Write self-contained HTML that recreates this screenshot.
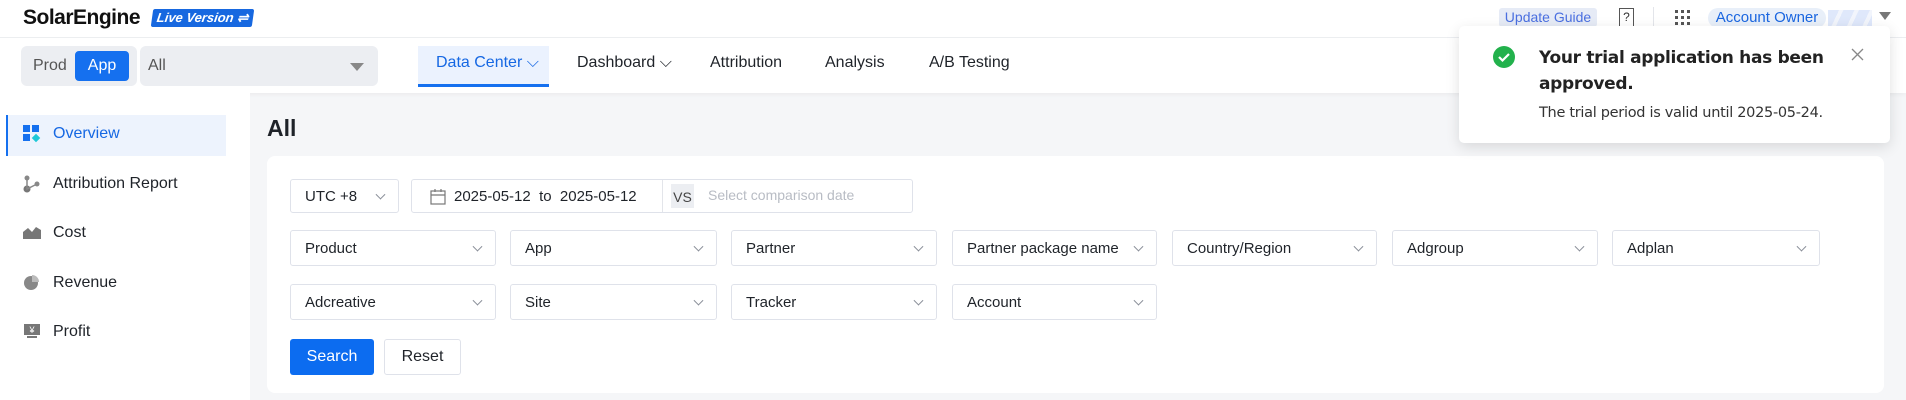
<!DOCTYPE html>
<html><head><meta charset="utf-8"><style>
*{box-sizing:border-box;margin:0;padding:0}
body{width:1906px;height:400px;overflow:hidden;background:#f5f6f8;font-family:"Liberation Sans",Arial,sans-serif;color:#1f2329;position:relative}
.abs{position:absolute}
.top{left:0;top:0;width:1906px;height:38px;background:#fff;border-bottom:1px solid #eceef1}
.bar2{left:0;top:38px;width:1906px;height:55px;background:#fff;box-shadow:0 2px 4px rgba(0,0,0,.04)}
.side{left:0;top:93px;width:250px;height:307px;background:#fff}
.sel{position:absolute;border:1px solid #dfe2ea;border-radius:3px;background:#fff;font-size:15px;display:flex;align-items:center;padding-left:14px;color:#1f2329}
.chev{position:absolute;right:14px;top:50%;width:7px;height:7px;border-right:1.3px solid #8a8f99;border-bottom:1.3px solid #8a8f99;transform:translateY(-70%) rotate(45deg)}
.nav{position:absolute;top:54px;font-size:16px;color:#1f2329}
.item{position:absolute;left:53px;font-size:16px;color:#1f2329}
</style></head><body>
<div class="abs top"></div>
<div class="abs" style="left:23px;top:6px;font-size:21px;font-weight:bold;letter-spacing:-0.5px;color:#111">SolarEngine</div>
<div class="abs" style="left:152px;top:9px;width:101px;height:18px;background:#1768e0;transform:skewX(-8deg);border-radius:2px;color:#fff;font-size:13px;font-weight:bold;font-style:italic;text-align:center;line-height:18px">Live Version ⇌</div>
<div class="abs" style="left:1499px;top:8px;width:98px;height:19px;background:#e6ebf6;border-radius:3px;font-size:14px;line-height:19px;text-align:center;color:#4a6fe0">Update Guide</div>
<div class="abs" style="left:1619px;top:8px;width:15px;height:19px;border:1.5px solid #555;font-size:12px;line-height:16px;text-align:center;color:#333">?</div>
<div class="abs" style="left:1653px;top:7px;width:1px;height:22px;background:#e3e5ea"></div>
<svg class="abs" style="left:1675px;top:10px" width="16" height="16"><g fill="#555"><rect x="0" y="0" width="3" height="3"/><rect x="6" y="0" width="3" height="3"/><rect x="12" y="0" width="3" height="3"/><rect x="0" y="6" width="3" height="3"/><rect x="6" y="6" width="3" height="3"/><rect x="12" y="6" width="3" height="3"/><rect x="0" y="12" width="3" height="3"/><rect x="6" y="12" width="3" height="3"/><rect x="12" y="12" width="3" height="3"/></g></svg>
<div class="abs" style="left:1708px;top:8px;width:118px;height:20px;background:#e8eff9;border-radius:10px;font-size:15px;line-height:20px;text-align:center;color:#1a66e0">Account Owner</div>
<div class="abs" style="left:1828px;top:10px;width:44px;height:16px;background:repeating-linear-gradient(115deg,#dfe8fb 0 10px,#f2f5fc 10px 14px)"></div>
<div class="abs" style="left:1879px;top:12px;width:0;height:0;border-left:6px solid transparent;border-right:6px solid transparent;border-top:8px solid #777"></div>

<div class="abs bar2"></div>
<div class="abs" style="left:21px;top:46px;width:116px;height:40px;background:#eceef2;border-radius:6px"></div>
<div class="abs" style="left:33px;top:57px;font-size:16px;color:#555">Prod</div>
<div class="abs" style="left:75px;top:51px;width:54px;height:30px;background:#1570ef;border-radius:4px;color:#fff;font-size:16px;line-height:30px;text-align:center">App</div>
<div class="abs" style="left:140px;top:46px;width:238px;height:40px;background:#eceef2;border-radius:6px"></div>
<div class="abs" style="left:148px;top:57px;font-size:16px;color:#555">All</div>
<div class="abs" style="left:350px;top:63px;border-left:7px solid transparent;border-right:7px solid transparent;border-top:8px solid #888"></div>
<div class="abs" style="left:418px;top:46px;width:131px;height:41px;background:#ebf2fe;border-bottom:3px solid #1570ef"></div>
<div class="nav" style="left:436px;color:#1668e3">Data Center ⌵</div>
<div class="nav" style="left:577px">Dashboard ⌵</div>
<div class="nav" style="left:710px">Attribution</div>
<div class="nav" style="left:825px">Analysis</div>
<div class="nav" style="left:929px">A/B Testing</div>

<div class="abs side"></div>
<div class="abs" style="left:6px;top:115px;width:220px;height:41px;background:#edf3fd;border-left:2px solid #1570ef"></div>
<svg class="abs" style="left:23px;top:125px" width="18" height="18"><rect x="0" y="0" width="7" height="7" fill="#1570ef"/><rect x="9" y="0" width="7" height="7" fill="#1570ef"/><rect x="0" y="9" width="7" height="7" fill="#1570ef"/><rect x="10" y="10" width="6" height="6" fill="#1ec8d8" transform="rotate(45 13 13)"/></svg>
<div class="item" style="top:125px;color:#1668e3">Overview</div>
<svg class="abs" style="left:23px;top:175px" width="18" height="18"><circle cx="4" cy="3" r="2.5" fill="#888"/><circle cx="4" cy="14" r="3.5" fill="#777"/><circle cx="14" cy="9" r="2.5" fill="#888"/><path d="M4 3V14L14 9" stroke="#888" stroke-width="1.5" fill="none"/></svg>
<div class="item" style="top:175px">Attribution Report</div>
<svg class="abs" style="left:23px;top:224px" width="18" height="16"><path d="M0 15V8L5 4L9 8L13 3L18 6V15Z" fill="#777"/></svg>
<div class="item" style="top:224px">Cost</div>
<svg class="abs" style="left:23px;top:274px" width="18" height="18"><circle cx="8" cy="9" r="7" fill="#888"/><path d="M9 1A7 7 0 0 1 16 8H9Z" fill="#bbb"/></svg>
<div class="item" style="top:274px">Revenue</div>
<svg class="abs" style="left:23px;top:323px" width="18" height="16"><rect x="1" y="1" width="16" height="11" fill="#777"/><rect x="4" y="13" width="10" height="2" fill="#777"/><text x="9" y="10" font-size="9" fill="#fff" text-anchor="middle" font-family="Liberation Sans">¥</text></svg>
<div class="item" style="top:323px">Profit</div>

<div class="abs" style="left:267px;top:115px;font-size:23px;font-weight:bold">All</div>
<div class="abs" style="left:267px;top:156px;width:1617px;height:237px;background:#fff;border-radius:8px"></div>
<div class="sel" style="left:290px;top:179px;width:109px;height:34px">UTC +8<span class="chev"></span></div>
<div class="sel" style="left:411px;top:179px;width:502px;height:34px;padding-left:18px">
<svg width="16" height="17" style="margin-right:8px"><rect x="1" y="3" width="14" height="13" fill="none" stroke="#777" stroke-width="1.2"/><path d="M1 7H15M5 1V4M11 1V4" stroke="#777" stroke-width="1.2"/></svg>2025-05-12&nbsp; to &nbsp;2025-05-12</div>
<div class="abs" style="left:662px;top:180px;width:1px;height:32px;background:#e3e5ea"></div>
<div class="abs" style="left:671px;top:184px;width:23px;height:24px;background:#eceef2;font-size:14px;line-height:26px;text-align:center;color:#444">VS</div>
<div class="abs" style="left:708px;top:187px;font-size:14px;color:#b8bcc4">Select comparison date</div>

<div class="sel" style="left:290px;top:230px;width:206px;height:36px">Product<span class="chev"></span></div>
<div class="sel" style="left:510px;top:230px;width:207px;height:36px">App<span class="chev"></span></div>
<div class="sel" style="left:731px;top:230px;width:206px;height:36px">Partner<span class="chev"></span></div>
<div class="sel" style="left:952px;top:230px;width:205px;height:36px">Partner package name<span class="chev"></span></div>
<div class="sel" style="left:1172px;top:230px;width:205px;height:36px">Country/Region<span class="chev"></span></div>
<div class="sel" style="left:1392px;top:230px;width:206px;height:36px">Adgroup<span class="chev"></span></div>
<div class="sel" style="left:1612px;top:230px;width:208px;height:36px">Adplan<span class="chev"></span></div>
<div class="sel" style="left:290px;top:284px;width:206px;height:36px">Adcreative<span class="chev"></span></div>
<div class="sel" style="left:510px;top:284px;width:207px;height:36px">Site<span class="chev"></span></div>
<div class="sel" style="left:731px;top:284px;width:206px;height:36px">Tracker<span class="chev"></span></div>
<div class="sel" style="left:952px;top:284px;width:205px;height:36px">Account<span class="chev"></span></div>
<div class="abs" style="left:290px;top:339px;width:84px;height:36px;background:#0c6cf0;border-radius:3px;color:#fff;font-size:16px;line-height:36px;text-align:center">Search</div>
<div class="abs" style="left:384px;top:339px;width:77px;height:36px;border:1px solid #dfe2ea;border-radius:3px;background:#fff;font-size:16px;line-height:34px;text-align:center">Reset</div>

<div class="abs" style="left:1459px;top:26px;width:431px;height:117px;background:#fff;border-radius:5px;box-shadow:0 4px 14px rgba(0,0,0,.12)"></div>
<svg class="abs" style="left:1492px;top:45px" width="24" height="24"><circle cx="12" cy="12" r="11" fill="#22b14c"/><path d="M7 12L10.5 15.5L17 9" stroke="#fff" stroke-width="2.2" fill="none"/></svg>
<div class="abs" style="left:1539px;top:45px;width:290px;font-size:17px;font-weight:bold;line-height:26px;color:#222;font-family:'DejaVu Sans','Liberation Sans',sans-serif;letter-spacing:-0.3px">Your trial application has been approved.</div>
<div class="abs" style="left:1539px;top:105px;font-size:14.5px;color:#333;font-family:'DejaVu Sans','Liberation Sans',sans-serif;letter-spacing:-0.3px">The trial period is valid until 2025-05-24.</div>
<svg class="abs" style="left:1851px;top:48px" width="13" height="13"><path d="M1 1L12 12M12 1L1 12" stroke="#888" stroke-width="1.3"/></svg>
</body></html>
